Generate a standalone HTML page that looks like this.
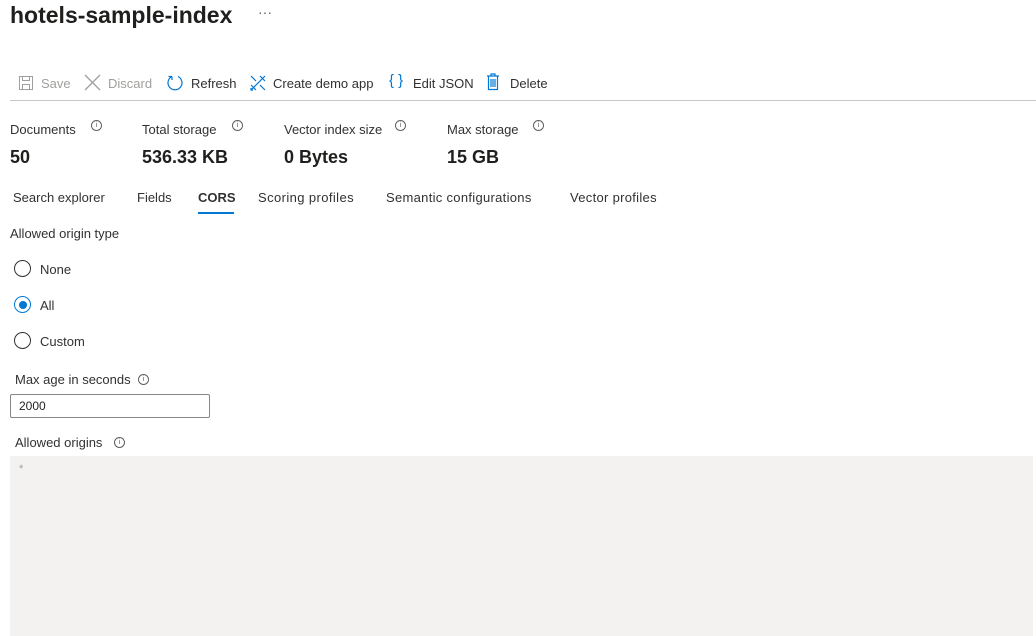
<!DOCTYPE html>
<html><head><style>
body{margin:0;width:1036px;height:636px;background:#fff;font-family:"Liberation Sans",sans-serif;color:#323130;position:relative;overflow:hidden}
.a{position:absolute;white-space:nowrap}
.t{font-size:13px}
.i{position:absolute;width:9px;height:9px;border:1px solid #605e5c;border-radius:50%;font-size:7px;line-height:9px;text-align:center;color:#605e5c}
.v{font-size:18px;font-weight:bold;color:#201f1e}
.r{position:absolute;width:17px;height:17px;border:1px solid #323130;border-radius:50%;box-sizing:border-box}
</style></head><body>
<div class="a" style="left:10px;top:2px;font-size:23px;font-weight:bold;color:#201f1e">hotels-sample-index</div>
<div class="a" style="left:258px;top:4px;font-size:14px;color:#605e5c">···</div>

<svg class="a" style="left:18px;top:75px" width="16" height="16" viewBox="0 0 16 16" fill="none" stroke="#a19f9d"><rect x="1.5" y="1.5" width="13" height="13"/><rect x="4.5" y="1.5" width="7" height="4"/><rect x="4.5" y="9.5" width="7" height="5"/></svg>
<div class="a t" style="left:41px;top:76px;color:#a19f9d">Save</div>
<svg class="a" style="left:84px;top:74px" width="17" height="17" viewBox="0 0 17 17" stroke="#a19f9d" stroke-width="1.3"><path d="M1 1L16 16M16 1L1 16"/></svg>
<div class="a t" style="left:108px;top:76px;color:#a19f9d">Discard</div>
<svg class="a" style="left:166px;top:74px" width="18" height="18" viewBox="0 0 18 18" fill="none" stroke="#0078d4" stroke-width="1.2"><path d="M6 2.5A7 7 0 1 0 12 2.5M6 2.5V6M6 2.5H2.5"/></svg>
<div class="a t" style="left:191px;top:76px">Refresh</div>
<svg class="a" style="left:249px;top:74px" width="18" height="18" viewBox="0 0 18 18" fill="none" stroke="#0078d4" stroke-width="1.2"><path d="M2 16L16 2M4 16l-2 0 0-2M2 2l5 5M16 16l-5-5M11 2l5 5M2 11l5 5"/></svg>
<div class="a t" style="left:273px;top:76px">Create demo app</div>
<div class="a" style="left:389px;top:72px;font-size:15px;color:#0078d4">{ }</div>
<div class="a t" style="left:413px;top:76px">Edit JSON</div>
<svg class="a" style="left:486px;top:73px" width="14" height="18" viewBox="0 0 14 18" fill="none" stroke="#0078d4" stroke-width="1.2"><path d="M1 3h12M5 3V1h4v2M2.5 3v13.5h9V3M5 6v8M7 6v8M9 6v8"/></svg>
<div class="a t" style="left:510px;top:76px">Delete</div>
<div class="a" style="left:10px;top:100px;width:1026px;height:1px;background:#c8c6c4"></div>

<div class="a t" style="left:10px;top:122px">Documents</div><div class="i" style="left:91px;top:120px">i</div>
<div class="a t" style="left:142px;top:122px">Total storage</div><div class="i" style="left:232px;top:120px">i</div>
<div class="a t" style="left:284px;top:122px">Vector index size</div><div class="i" style="left:395px;top:120px">i</div>
<div class="a t" style="left:447px;top:122px">Max storage</div><div class="i" style="left:533px;top:120px">i</div>
<div class="a v" style="left:10px;top:147px">50</div>
<div class="a v" style="left:142px;top:147px">536.33 KB</div>
<div class="a v" style="left:284px;top:147px">0 Bytes</div>
<div class="a v" style="left:447px;top:147px">15 GB</div>

<div class="a t" style="left:13px;top:190px">Search explorer</div>
<div class="a t" style="left:137px;top:190px">Fields</div>
<div class="a t" style="left:198px;top:190px;font-weight:bold">CORS</div>
<div class="a" style="left:198px;top:212px;width:36px;height:2px;background:#0078d4"></div>
<div class="a t" style="left:258px;top:190px;letter-spacing:0.4px">Scoring profiles</div>
<div class="a t" style="left:386px;top:190px;letter-spacing:0.3px">Semantic configurations</div>
<div class="a t" style="left:570px;top:190px;letter-spacing:0.3px">Vector profiles</div>

<div class="a t" style="left:10px;top:226px">Allowed origin type</div>
<div class="r" style="left:14px;top:260px"></div><div class="a t" style="left:40px;top:262px">None</div>
<div class="r" style="left:14px;top:296px;border-color:#0078d4"><div style="position:absolute;left:3.5px;top:3.5px;width:8px;height:8px;border-radius:50%;background:#0078d4"></div></div><div class="a t" style="left:40px;top:298px">All</div>
<div class="r" style="left:14px;top:332px"></div><div class="a t" style="left:40px;top:334px">Custom</div>

<div class="a t" style="left:15px;top:372px">Max age in seconds</div><div class="i" style="left:138px;top:374px">i</div>
<div class="a" style="left:10px;top:394px;width:198px;height:22px;border:1px solid #8a8886;border-radius:2px"></div>
<div class="a" style="left:19px;top:399px;font-size:12px;color:#201f1e">2000</div>
<div class="a t" style="left:15px;top:435px">Allowed origins</div><div class="i" style="left:114px;top:437px">i</div>
<div class="a" style="left:10px;top:456px;width:1023px;height:180px;background:#f3f2f1"></div>
<div class="a" style="left:19px;top:463px;font-size:11px;color:#a19f9d">*</div>
</body></html>
